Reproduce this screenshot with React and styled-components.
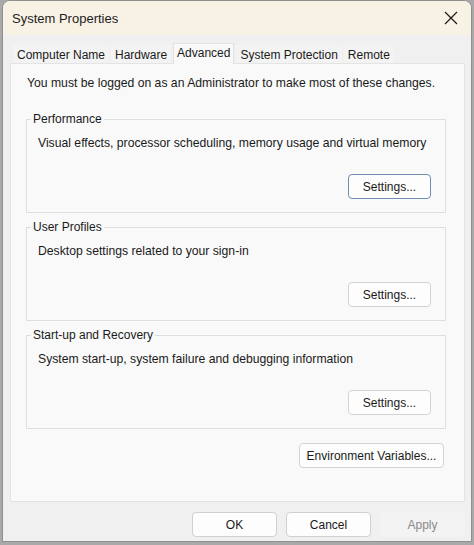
import React from 'react';
import styled, { createGlobalStyle } from 'styled-components';

const GlobalStyle = createGlobalStyle`
    html, body {
        margin: 0;
        padding: 0;
        background: #a9a9a9;
        font-family: "Liberation Sans", Arial, sans-serif;
        color: #1a1a1a;
        overflow: hidden;
    }
`;

const tabs = ['Computer Name', 'Hardware', 'Advanced', 'System Protection', 'Remote'];

const groups = [
    { title: 'Performance', text: 'Visual effects, processor scheduling, memory usage and virtual memory', primary: true },
    { title: 'User Profiles', text: 'Desktop settings related to your sign-in' },
    { title: 'Start-up and Recovery', text: 'System start-up, system failure and debugging information' },
];

export default function App() {
    return (
        <>
            <GlobalStyle />
            <Window>
                <TitleBar>
                    <Title>System Properties</Title>
                    <CloseButton aria-label="Close">
                        <svg width="14" height="14" viewBox="0 0 14 14">
                            <path d="M1 1 L13 13 M13 1 L1 13" stroke="#1a1a1a" strokeWidth="1.2" fill="none" />
                        </svg>
                    </CloseButton>
                </TitleBar>
                <Body>
                    <TabRow>
                        {tabs.map((t) => (
                            <Tab key={t} selected={t === 'Advanced'}>{t}</Tab>
                        ))}
                    </TabRow>
                    <Panel>
                        <Notice>You must be logged on as an Administrator to make most of these changes.</Notice>
                        {groups.map((g) => (
                            <GroupBox key={g.title}>
                                <Legend>{g.title}</Legend>
                                <GroupBody>
                                    <GroupText>{g.text}</GroupText>
                                    <ButtonRow>
                                        <Button primary={g.primary}>Settings...</Button>
                                    </ButtonRow>
                                </GroupBody>
                            </GroupBox>
                        ))}
                        <EnvRow>
                            <Button wide>Environment Variables...</Button>
                        </EnvRow>
                    </Panel>
                    <Footer>
                        <FooterButton>OK</FooterButton>
                        <FooterButton>Cancel</FooterButton>
                        <FooterButton disabled>Apply</FooterButton>
                    </Footer>
                </Body>
            </Window>
        </>
    );
}

const Window = styled.div`
    box-sizing: border-box;
    margin-left: 2px;
    width: 470px;
    height: 542px;
    background: #f0f0f0;
    border: 1px solid #8f8f8f;
    border-radius: 8px 8px 0 0;
    overflow: hidden;
    display: flex;
    flex-direction: column;
`;

const TitleBar = styled.div`
    height: 34px;
    background: #f8f2e5;
    display: flex;
    align-items: center;
    justify-content: space-between;
    padding: 0 12px 0 9px;
    flex-shrink: 0;
`;

const Title = styled.span`
    font-size: 13px;
    color: #1c1c1c;
`;

const CloseButton = styled.div`
    width: 16px;
    height: 16px;
    display: flex;
    align-items: center;
    justify-content: center;
`;

const Body = styled.div`
    flex: 1;
    display: flex;
    flex-direction: column;
    padding: 7px 6px 0 7px;
`;

const TabRow = styled.div`
    display: flex;
    align-items: flex-end;
    gap: 2px;
    padding-left: 3px;
    height: 21px;
`;

const Tab = styled.div`
    box-sizing: border-box;
    height: ${(props) => (props.selected ? '21px' : '18px')};
    padding: 0 3px;
    font-size: 12px;
    line-height: ${(props) => (props.selected ? '19px' : '18px')};
    background: ${(props) => (props.selected ? '#f9f9f9' : '#f3f3f3')};
    border: 1px solid ${(props) => (props.selected ? '#e2e2e2' : 'transparent')};
    border-bottom: none;
    margin-bottom: ${(props) => (props.selected ? '-1px' : '0')};
    position: relative;
    z-index: ${(props) => (props.selected ? 1 : 0)};
    color: #1a1a1a;
`;

const Panel = styled.div`
    box-sizing: border-box;
    height: 439px;
    background: #f9f9f9;
    border: 1px solid #e4e4e4;
    padding: 11px 18px 0 15px;
    display: flex;
    flex-direction: column;
`;

const Notice = styled.div`
    font-size: 12.2px;
    line-height: 16px;
    padding-left: 1px;
    margin-bottom: 21px;
`;

const GroupBox = styled.fieldset`
    margin: 0 0 7px 0;
    padding: 0 14px 13px 11px;
    border: 1px solid #dedede;
    box-sizing: border-box;
`;

const Legend = styled.legend`
    font-size: 12px;
    line-height: 15px;
    padding: 0 2px;
    margin-left: -7px;
    color: #1a1a1a;
`;

const GroupBody = styled.div`
    height: 72px;
    display: flex;
    flex-direction: column;
    justify-content: space-between;
`;

const GroupText = styled.div`
    font-size: 12.2px;
    line-height: 16px;
    margin-top: 8px;
`;

const ButtonRow = styled.div`
    display: flex;
    justify-content: flex-end;
`;

const Button = styled.div`
    box-sizing: border-box;
    height: 25px;
    width: ${(props) => (props.wide ? '145px' : '83px')};
    display: flex;
    align-items: center;
    justify-content: center;
    font-size: 12px;
    background: #fdfdfd;
    border: 1px solid ${(props) => (props.primary ? '#6f8fb0' : '#d3d3d3')};
    border-radius: 4px;
    color: #1a1a1a;
`;

const EnvRow = styled.div`
    display: flex;
    justify-content: flex-end;
    margin-top: 7px;
    padding-right: 2px;
`;

const Footer = styled.div`
    display: flex;
    justify-content: flex-end;
    gap: 9px;
    padding: 10px 0 0 0;
`;

const FooterButton = styled.div`
    box-sizing: border-box;
    width: 85px;
    height: 25px;
    display: flex;
    align-items: center;
    justify-content: center;
    font-size: 12px;
    border-radius: 4px;
    background: ${(props) => (props.disabled ? '#f3f3f3' : '#fdfdfd')};
    border: 1px solid ${(props) => (props.disabled ? '#f3f3f3' : '#d0d0d0')};
    color: ${(props) => (props.disabled ? '#8a8a8a' : '#1a1a1a')};
`;
